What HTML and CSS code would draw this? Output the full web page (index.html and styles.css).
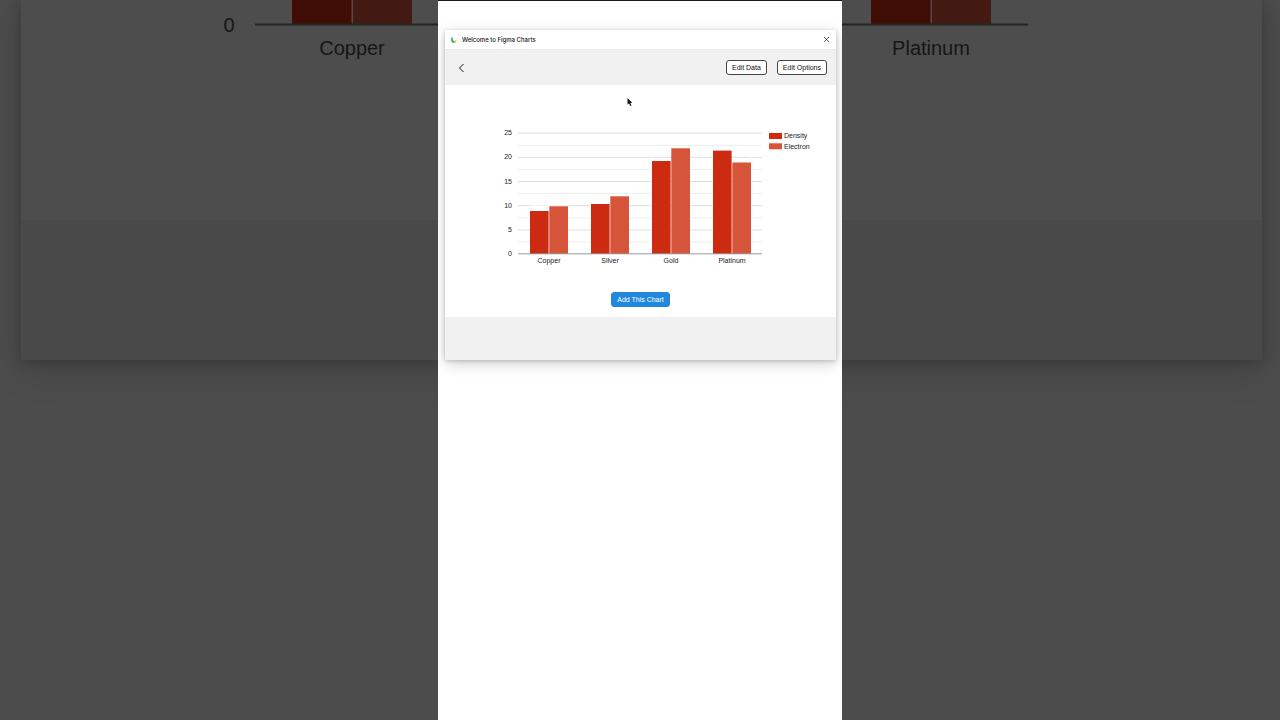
FILE: index.html
```html
<!DOCTYPE html>
<html lang="en">
<head>
<meta charset="utf-8">
<meta name="viewport" content="width=device-width, initial-scale=1">
<title>Figma Charts</title>
<link rel="stylesheet" href="styles.css">
</head>
<body>
<div class="backdrop" aria-hidden="true">
  <div class="backdrop-window">
    <svg class="backdrop-chart" viewBox="0 0 1241 220">
      <path class="dim-dark" d="M271 0h60v24h-60zM850 0h60v24h-60z"/>
      <path class="dim-light" d="M332 0h59v24h-59zM911 0h59v24h-59z"/>
      <path class="dim-gap" d="M331 0v23M910 0v23"/>
      <path class="dim-axis" d="M234 24.500H1007"/>
      <text x="208" y="32">0</text>
      <text x="331" y="55">Copper</text>
      <text x="910" y="55">Platinum</text>
    </svg>
    <div class="backdrop-footer"></div>
  </div>
</div>
<main class="stage">
  <section class="dialog" aria-labelledby="dialog-title">
    <header class="titlebar">
      <svg class="logo" viewBox="0 0 8 8" aria-hidden="true">
        <path d="M1 1 3 2.200V5L1 4Z" fill="#36bfa4"/>
        <path d="M1 4 3.500 4.500 5 7H3.200Q1.300 6.500 1 4Z" fill="#2aa476"/>
        <path d="M3.500 4.700 6.700 4.200Q6.500 7 4.300 7Z" fill="#f2c431"/>
      </svg>
      <h1 class="title" id="dialog-title">Welcome to Figma Charts</h1>
      <button class="icon-button" type="button" aria-label="Close">
        <svg class="close-icon" viewBox="0 0 7 7" aria-hidden="true"><path d="M1 1 6 6M6 1 1 6"/></svg>
      </button>
    </header>
    <div class="toolbar">
      <button class="icon-button" type="button" aria-label="Back">
        <svg class="back-icon" viewBox="0 0 7 10" aria-hidden="true"><path d="M5.500 1 1.500 5 5.500 9"/></svg>
      </button>
      <div class="actions">
        <button class="button" type="button">Edit Data</button>
        <button class="button" type="button">Edit Options</button>
      </div>
    </div>
    <div class="content">
      <svg class="chart" viewBox="0 0 391 148" role="img" aria-label="Density and Electron by metal">
        <path class="grid-minor" d="M73 20.500H317M73 44.500H317M73 68.500H317M73 93H317M73 117H317"/>
        <path class="grid-major" d="M73 8H317M73 32.300H317M73 56.500H317M73 80.700H317M73 105H317"/>
        <g class="halo">
          <rect x="85" y="81" width="38" height="48"/>
          <rect x="146" y="71" width="38" height="58"/>
          <rect x="207" y="23" width="38" height="106"/>
          <rect x="268" y="26" width="38" height="103"/>
        </g>
        <g class="density">
          <rect x="85" y="86" width="18.600" height="43"/>
          <rect x="146" y="79" width="18.600" height="50"/>
          <rect x="207" y="36" width="18.600" height="93"/>
          <rect x="268" y="25.600" width="18.600" height="103.400"/>
          <rect x="324" y="8" width="13" height="6"/>
        </g>
        <g class="electron">
          <rect x="104.300" y="81.300" width="18.700" height="47.700"/>
          <rect x="165.300" y="71.300" width="18.700" height="57.700"/>
          <rect x="226.300" y="23.300" width="18.700" height="105.700"/>
          <rect x="287.300" y="37.500" width="18.700" height="91.500"/>
          <rect x="324" y="18.300" width="13" height="6"/>
        </g>
        <path class="axis" d="M73 128.800H317"/>
        <g class="values">
          <text x="67" y="10">25</text>
          <text x="67" y="34">20</text>
          <text x="67" y="59">15</text>
          <text x="67" y="83">10</text>
          <text x="67" y="107">5</text>
          <text x="67" y="131">0</text>
        </g>
        <g class="names">
          <text x="104" y="138">Copper</text>
          <text x="165" y="138">Silver</text>
          <text x="226" y="138">Gold</text>
          <text x="287" y="138">Platinum</text>
        </g>
        <text x="339" y="13">Density</text>
        <text x="339" y="24">Electron</text>
      </svg>
      <button class="button primary" type="button">Add This Chart</button>
    </div>
    <footer class="footer"></footer>
  </section>
  <svg class="cursor" viewBox="0 0 8 10" aria-hidden="true"><path d="M1.500 1V7.700L3 6.300 4.300 9 5.500 8.400 4.300 5.900H6.300Z"/></svg>
</main>
</body>
</html>
```
FILE: styles.css
```css
* {
  box-sizing: border-box;
}

body {
  margin: 0;
  background: #4c4c4c;
  color: #222;
  font-family: "Liberation Sans", Arial, sans-serif;
  font-size: 7px;
}

.backdrop {
  position: absolute;
  inset: 0;
  overflow: hidden;
}

.backdrop-window {
  margin: 0 18px 0 21px;
  background: #4d4d4d;
  box-shadow: 0 8px 40px rgba(0, 0, 0, 0.12), 0 3px 12px rgba(0, 0, 0, 0.2);
}

.backdrop-chart {
  display: block;
  width: 100%;
  fill: #161616;
  font-size: 20px;
  text-anchor: middle;
}

.dim-dark {
  fill: #400c06;
}

.dim-light {
  fill: #421a12;
}

.dim-gap {
  stroke: #5f4540;
}

.dim-axis {
  stroke: #242424;
  stroke-width: 2px;
}

.backdrop-footer {
  height: 140px;
  background: #494949;
}

.stage {
  position: relative;
  width: 404px;
  max-width: 100%;
  min-height: 100vh;
  margin: 0 auto;
  padding: 29px 6px 0 7px;
  overflow: hidden;
  border-top: 1px solid #1c191d;
  background: #fff;
}

.dialog {
  background: #fff;
  box-shadow: 0 4px 14px rgba(0, 0, 0, 0.17), 0 1px 4px rgba(0, 0, 0, 0.2);
}

.titlebar {
  display: flex;
  align-items: center;
  height: 20px;
  padding: 0 6px 0 5px;
  border-bottom: 1px solid #e9e9e9;
}

.logo {
  width: 8px;
  height: 8px;
}

.title {
  flex: 1;
  margin: 0 0 0 4px;
  color: #111;
  font: 500 6px/8px Inter, sans-serif;
}

.icon-button {
  display: flex;
  padding: 0;
  border: 0;
  background: none;
}

.icon-button svg {
  fill: none;
  stroke: #111;
}

.close-icon {
  width: 7px;
  height: 7px;
  stroke-width: 0.700;
}

.back-icon {
  width: 7px;
  height: 10px;
}

.toolbar {
  display: flex;
  align-items: center;
  justify-content: space-between;
  height: 35px;
  padding: 0 9px 0 13px;
  background: #f1f1f1;
}

.actions {
  display: flex;
  gap: 10px;
}

.button {
  height: 15px;
  padding: 0 5px;
  border: 1px solid #444;
  border-radius: 3px;
  background: #fff;
  color: #111;
  font: 7px/13px "Liberation Sans", Arial, sans-serif;
}

.content {
  display: flex;
  flex-direction: column;
  align-items: center;
  padding: 40px 0 10px;
}

.chart {
  display: block;
  width: 100%;
  fill: #222;
}

.grid-major {
  stroke: #dedede;
}

.grid-minor {
  stroke: #efefef;
}

.halo {
  fill: none;
  stroke: #fff;
  stroke-width: 1px;
}

.density {
  fill: #cc2b12;
}

.electron {
  fill: #d65439;
}

.axis {
  stroke: #999;
}

.values {
  text-anchor: end;
}

.names {
  text-anchor: middle;
}

.primary {
  margin-top: 19px;
  border-color: #2586d9;
  background: #2088dd;
  color: #fff;
}

.footer {
  height: 43px;
  background: #f1f1f1;
}

.cursor {
  position: absolute;
  top: 96px;
  left: 188px;
  width: 8px;
  height: 10px;
  fill: #111;
}
```
